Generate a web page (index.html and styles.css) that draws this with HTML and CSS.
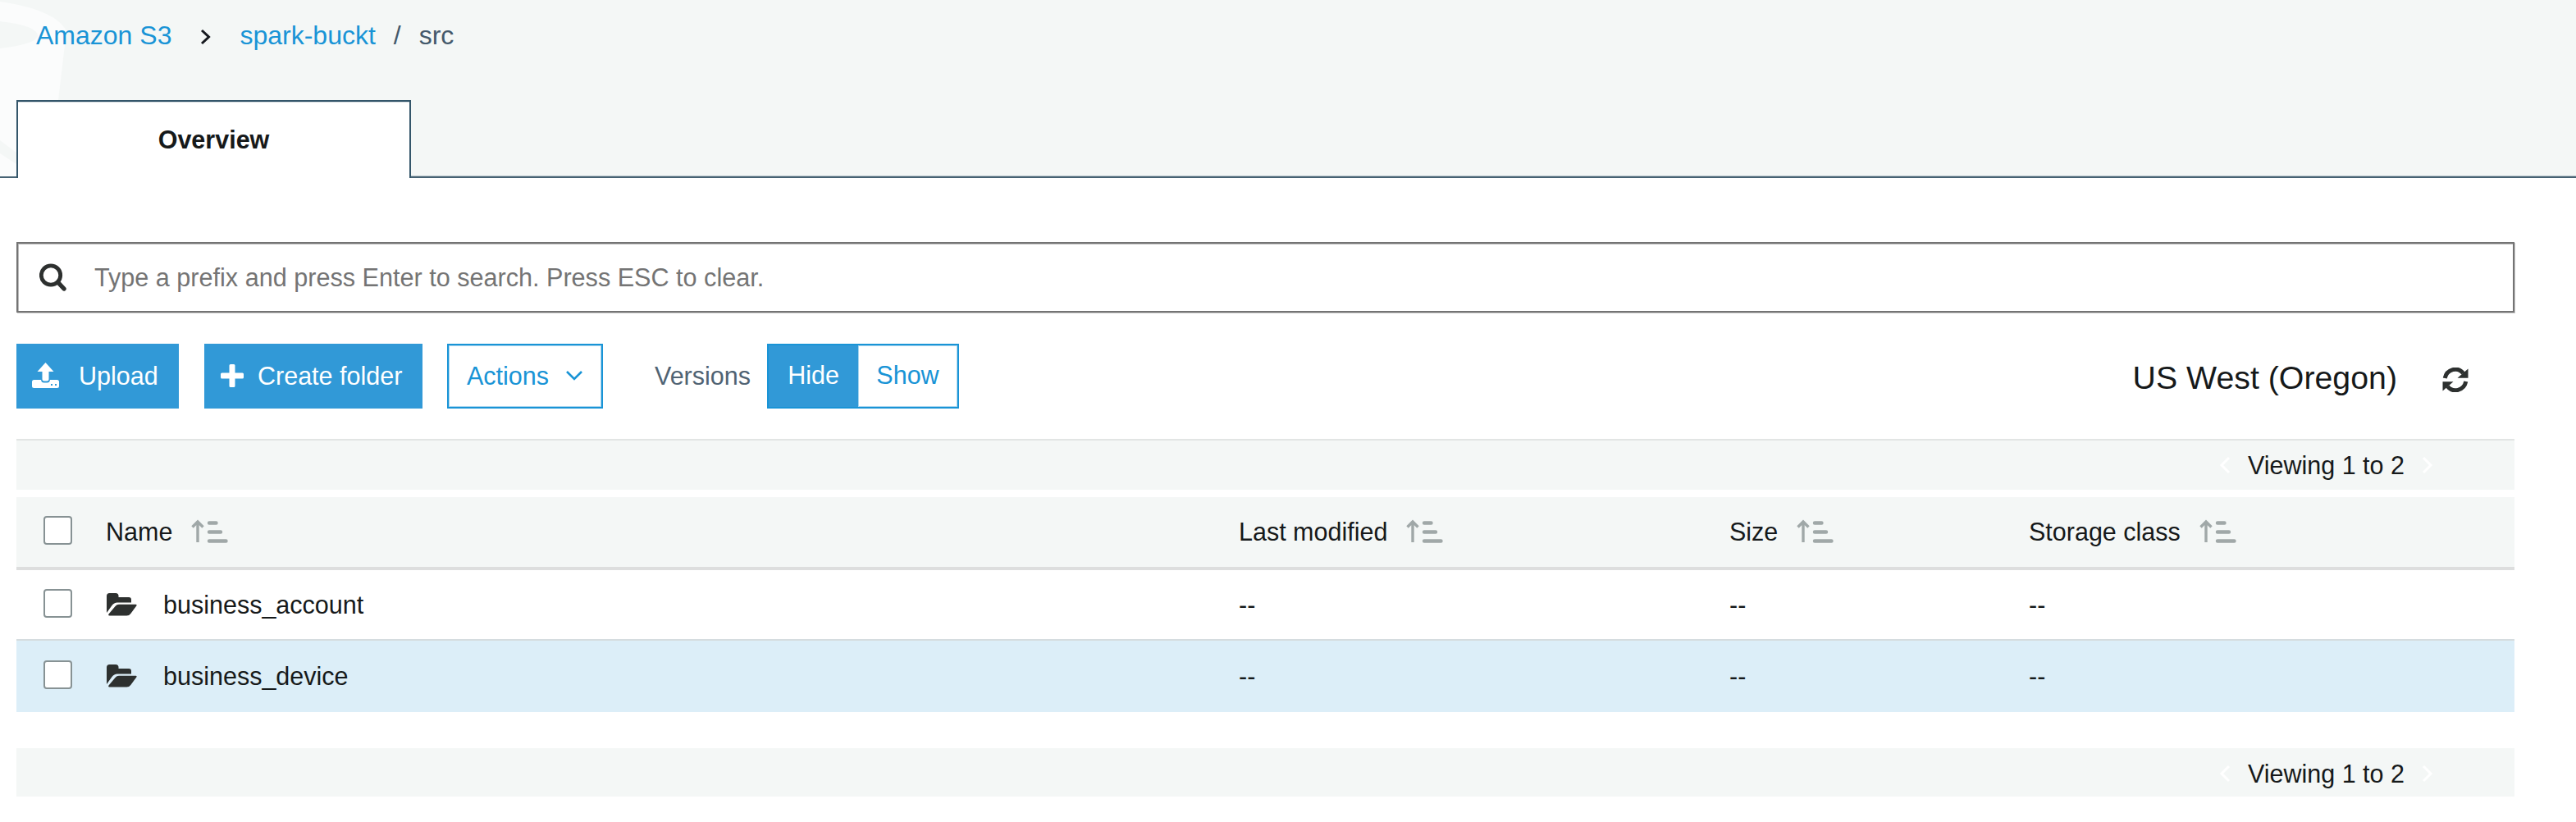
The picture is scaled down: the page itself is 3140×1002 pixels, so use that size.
FILE: index.html
```html
<!DOCTYPE html>
<html lang="en">
<head>
<meta charset="utf-8">
<title>Amazon S3</title>
<link rel="stylesheet" href="styles.css">
</head>
<body>
<svg class="sprite" aria-hidden="true">
  <symbol id="sort" viewBox="0 0 45 30"><path d="M8 28V2.500M1.500 9.500L8 3l6.500 6.500" fill="none" stroke="#a0a8a8" stroke-width="3.400"/><path d="M22 4.500h8.500M22 15.500h14M22 26.500h20.500" fill="none" stroke="#a0a8a8" stroke-width="4.400" stroke-linecap="round"/></symbol>
  <symbol id="folder" viewBox="0 0 37 28"><path d="M0 24V3.500Q0 0 3.500 0H11q3.500 0 3.500 3.500V5H27q3 0 3 3v3.500H13q-4 0-6.500 3.500L0 24z"/><path d="M2.500 25.500l8-9.500q1.800-2.200 4.500-2.200h20.500q1.700 0 .8 1.700l-7 9.500q-1.800 2.500-5 2.500H3.500q-2 0-1-2z"/></symbol>
  <symbol id="left" viewBox="0 0 14 22"><path d="M12 2L3 11l9 9" fill="none" stroke="#fff" stroke-width="3"/></symbol>
  <symbol id="right" viewBox="0 0 14 22"><path d="M2 2l9 9-9 9" fill="none" stroke="#fff" stroke-width="3"/></symbol>
</svg>
<header class="header">
  <svg class="watermark" width="84" height="215" viewBox="0 0 84 215"><path d="M0 2C36 7 72 18 81 38L71 122H20V198L0 174Z" fill="#fbfcfc"/><path d="M0 26Q46 31 46 44Q43 54 0 59Z" fill="#f4f7f6"/><path d="M0 170L20 186V215H0Z" fill="#fbfcfc"/><path d="M0 171L20 186V200L0 187Z" fill="#f4f7f6"/></svg>
  <nav class="crumbs">
    <a class="crumb-link">Amazon S3</a>
    <svg class="crumb-arrow" width="14" height="20" viewBox="0 0 14 20"><path d="M2 2l8.500 8L2 18" fill="none" stroke="#16191f" stroke-width="3"/></svg>
    <a class="crumb-link">spark-buckt</a><span class="slash">/</span><span>src</span>
  </nav>
  <div class="tabs"><div class="tab-edge"></div><div class="tab">Overview</div><div class="tab-line"></div></div>
</header>
<main class="content">
  <div class="search">
    <svg width="34" height="34" viewBox="0 0 34 34"><circle cx="14" cy="14.500" r="11.700" fill="none" stroke="#2d302f" stroke-width="4.800"/><path d="M22.500 23l7.500 8" stroke="#2d302f" stroke-width="5.400" stroke-linecap="round"/></svg>
    <span>Type a prefix and press Enter to search. Press ESC to clear.</span>
  </div>
  <div class="toolbar">
    <div class="btn upload"><svg width="34" height="32" viewBox="0 0 34 32"><path d="M16.500 0l10 11h-6v9q0 2.500-2.500 2.500h-3q-2.500 0-2.500-2.500v-9h-6z"/><path fill-rule="evenodd" d="M2.500 21H11q.5 3.500 3.500 3.500h4q3 0 3.500-3.500h8.500q2.500 0 2.500 2.500v5q0 2.500-2.500 2.500h-28Q0 31 0 28.500v-5Q0 21 2.500 21zM23 26v2h2v-2zM28 26v2h2v-2z"/></svg><span>Upload</span></div>
    <div class="btn create"><svg width="28" height="28" viewBox="0 0 28 28"><path d="M12 0h4q1.500 0 1.500 1.500v9h9Q28 10.500 28 12v4q0 1.500-1.500 1.500h-9v9q0 1.500-1.500 1.500h-4q-1.500 0-1.500-1.500v-9h-9Q0 17.500 0 16v-4q0-1.500 1.500-1.500h9v-9Q10.500 0 12 0z"/></svg><span>Create folder</span></div>
    <div class="btn actions"><span>Actions</span><svg width="22" height="14" viewBox="0 0 22 14"><path d="M2 2l9 9 9-9" fill="none" stroke="#1994d6" stroke-width="2.600"/></svg></div>
    <span class="versions">Versions</span>
    <div class="toggle"><div class="hide">Hide</div><div class="show">Show</div></div>
    <span class="region">US West (Oregon)</span>
    <svg class="refresh" width="32" height="30" viewBox="0 0 32 30"><g fill="none" stroke="#2d302f" stroke-width="5"><path d="M3.200 13C5.500 2 19-1.500 25.500 7"/><path d="M28.800 17C26.500 28 13 31.500 6.500 23"/></g><path d="M31.500 1.500v11.300H18.500zM.5 28.500V17.200h13z" fill="#2d302f"/></svg>
  </div>
  <div class="pager top"><svg width="14" height="22"><use href="#left"/></svg><span>Viewing 1 to 2</span><svg width="14" height="22"><use href="#right"/></svg></div>
  <div class="row head">
    <i class="box"></i><div class="name">Name<svg width="45" height="30"><use href="#sort"/></svg></div>
    <div class="col">Last modified<svg width="45" height="30"><use href="#sort"/></svg></div>
    <div class="col">Size<svg width="45" height="30"><use href="#sort"/></svg></div>
    <div class="col">Storage class<svg width="45" height="30"><use href="#sort"/></svg></div>
  </div>
  <div class="row first">
    <i class="box"></i><div class="name"><svg class="folder" width="37" height="28"><use href="#folder"/></svg>business_account</div>
    <div class="col">--</div><div class="col">--</div><div class="col">--</div>
  </div>
  <div class="row selected">
    <i class="box"></i><div class="name"><svg class="folder" width="37" height="28"><use href="#folder"/></svg>business_device</div>
    <div class="col">--</div><div class="col">--</div><div class="col">--</div>
  </div>
  <div class="pager bottom"><svg width="14" height="22"><use href="#left"/></svg><span>Viewing 1 to 2</span><svg width="14" height="22"><use href="#right"/></svg></div>
</main>
</body>
</html>
```
FILE: styles.css
```css
* { box-sizing: border-box; }
body { margin: 0; height: 1002px; overflow: hidden; background: #fff; color: #16191a; font: 30.5px/36px "Liberation Sans", Arial, sans-serif; white-space: nowrap; }
svg { display: block; flex: none; }
.sprite { position: absolute; width: 0; height: 0; }
.header { position: relative; height: 217px; background: #f4f7f6; }
.watermark { position: absolute; left: 0; top: 0; }
.crumbs { position: relative; display: flex; align-items: center; height: 122px; padding: 0 0 36px 44px; font-size: 32px; color: #44596b; }
.crumb-link { color: #1994d6; }
.crumb-arrow { margin: 3px 34px 0 35px; }
.slash { margin: 0 22px; }
.tabs { position: relative; display: flex; height: 95px; }
.tab-edge { width: 20px; border-bottom: 2px solid #466273; }
.tab { width: 481px; padding-top: 28px; border: 2px solid #34566a; border-bottom: 0; background: #fff; box-shadow: inset 0 1px #d5dce0; text-align: center; font-weight: bold; }
.tab-line { flex: 1; border-bottom: 2px solid #466273; box-shadow: inset 0 -1px #b8c4ca; }
.content { width: 3065px; padding: 78px 0 0 20px; }
.search { display: flex; align-items: center; gap: 33px; height: 86px; padding: 0 0 1px 26px; border: 2px solid #747474; box-shadow: inset 1px 1px #b9b9b9, 1px 1px #c8c8c8; color: #747474; font-size: 30.6px; }
.toolbar { display: flex; align-items: center; height: 79px; margin-top: 38px; }
.btn { display: flex; align-items: center; height: 79px; padding-bottom: 2px; background: #3199d7; color: #fff; fill: #fff; }
.upload { width: 198px; padding-left: 19px; gap: 23px; margin-right: 31px; }
.create { width: 266px; padding-left: 20px; gap: 17px; margin-right: 30px; }
.actions { width: 190px; padding-left: 22px; gap: 20px; background: #fff; border: 2px solid #1994d6; box-shadow: inset 0 0 0 1px #a9d6ef; color: #1994d6; }
.versions { width: 137px; margin-left: 63px; padding-bottom: 2px; color: #506373; margin-right: 0; }
.toggle { display: flex; width: 234px; height: 79px; border: 2px solid #1994d6; line-height: 73px; text-align: center; }
.hide { width: 109px; background: #3199d7; color: #fff; }
.show { flex: 1; box-shadow: inset 0 0 0 1px #a9d6ef; color: #1994d6; }
.region { margin-left: auto; padding-top: 2px; font-size: 39.3px; }
.refresh { margin: 9px 56px 0 55px; }
.pager { display: flex; align-items: center; justify-content: flex-end; gap: 21px; padding-right: 99px; background: #f4f7f6; }
.top { height: 62px; margin-top: 37px; border-top: 2px solid #e2e5e4; }
.bottom { height: 59px; margin-top: 44px; padding-top: 3px; }
.row { display: grid; grid-template-columns: 109px 1381px 598px 365px 1fr; align-items: center; }
.box { width: 35px; height: 35px; margin-left: 33px; background: #fff; border: 2px solid #879294; border-radius: 4px; }
.name, .col { display: flex; align-items: center; gap: 23px; }
.head { height: 89px; margin-top: 9px; padding-bottom: 1px; background: #f4f7f6; border-bottom: 4px solid #dddede; }
.head .box { margin-top: -3px; }
.first { height: 84px; padding-bottom: 1px; }
.first .box { margin-top: -2px; }
.selected { height: 89px; padding-bottom: 2px; border-top: 2px solid #d5dcdf; background: #dceef8; }
.selected .box { margin-top: -2px; }
.name .folder { margin: 0 9px 0 1px; fill: #2d302f; }
```
